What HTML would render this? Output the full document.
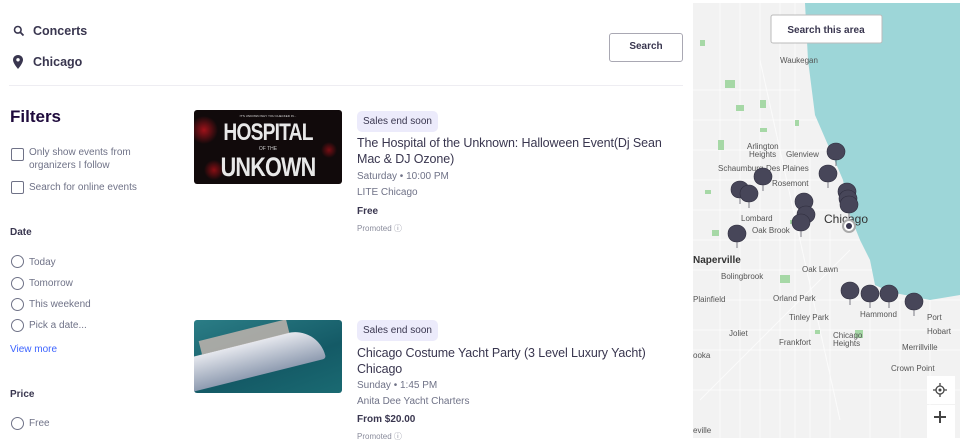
<!DOCTYPE html>
<html><head><meta charset="utf-8"><style>
*{margin:0;padding:0;box-sizing:border-box}
body{width:960px;height:438px;overflow:hidden;background:#fff;font-family:"Liberation Sans",sans-serif;color:#39364f;position:relative}
.a{position:absolute;white-space:nowrap}
.sm{font-size:10px;color:#6f7287}
.cb{position:absolute;width:13px;height:13px;border:1.3px solid #6f7287;border-radius:2px}
.rd{position:absolute;width:13px;height:13px;border:1.3px solid #6f7287;border-radius:50%}
.badge{position:absolute;background:#ecebfb;border-radius:5px;font-size:10px;color:#39364f;padding:5px 6px;height:21px}
.t{font-size:12.5px;color:#39364f;line-height:16px;white-space:normal;letter-spacing:-0.1px}
</style></head><body>
<svg class="a" style="left:13px;top:25px" width="12" height="12" viewBox="0 0 12 12"><circle cx="4.8" cy="4.8" r="3.3" fill="none" stroke="#39364f" stroke-width="1.6"/><path d="M7.3 7.3L10.5 10.5" stroke="#39364f" stroke-width="1.8"/></svg>
<div class="a" style="left:33px;top:24px;font-size:12.5px;font-weight:bold;color:#39364f">Concerts</div>
<svg class="a" style="left:13px;top:55px" width="10" height="14" viewBox="0 0 10 14"><path d="M5 0C2.2 0 0 2.2 0 4.8 0 8.5 5 14 5 14S10 8.5 10 4.8C10 2.2 7.8 0 5 0z" fill="#39364f"/><circle cx="5" cy="4.8" r="1.7" fill="#fff"/></svg>
<div class="a" style="left:33px;top:55px;font-size:12.5px;font-weight:bold;color:#39364f">Chicago</div>
<div class="a" style="left:609px;top:33px;width:74px;height:29px;border:1.3px solid #a9a8b3;border-radius:3px;font-size:10px;font-weight:bold;text-align:center;line-height:26px">Search</div>
<div class="a" style="left:9px;top:85px;width:674px;height:1px;background:#eeedf2"></div>

<div class="a" style="left:10px;top:107px;font-size:17px;font-weight:bold;color:#1e0a3c">Filters</div>
<div class="cb" style="left:11px;top:148px"></div>
<div class="a sm" style="left:29px;top:146px;line-height:13px;white-space:normal;width:110px">Only show events from organizers I follow</div>
<div class="cb" style="left:11px;top:181px"></div>
<div class="a sm" style="left:29px;top:182px">Search for online events</div>
<div class="a" style="left:10px;top:227px;font-size:10px;font-weight:bold">Date</div>
<div class="rd" style="left:11px;top:255px"></div><div class="a sm" style="left:29px;top:257px">Today</div>
<div class="rd" style="left:11px;top:277px"></div><div class="a sm" style="left:29px;top:278px">Tomorrow</div>
<div class="rd" style="left:11px;top:298px"></div><div class="a sm" style="left:29px;top:299px">This weekend</div>
<div class="rd" style="left:11px;top:319px"></div><div class="a sm" style="left:29px;top:320px">Pick a date...</div>
<div class="a" style="left:10px;top:344px;font-size:10px;color:#3d64ff">View more</div>
<div class="a" style="left:10px;top:389px;font-size:10px;font-weight:bold">Price</div>
<div class="rd" style="left:11px;top:417px"></div><div class="a sm" style="left:29px;top:418px">Free</div>

<div class="a" style="left:194px;top:110px;width:148px;height:74px;background:#110a0b;border-radius:3px;overflow:hidden">
<div style="position:absolute;left:0;top:0;width:148px;height:74px;background:radial-gradient(circle at 10px 20px,#a0121a 0,transparent 14px),radial-gradient(circle at 20px 60px,#8a0e14 0,transparent 10px),radial-gradient(circle at 135px 40px,#7a0e14 0,transparent 8px)"></div>
<div style="position:absolute;left:0;top:4px;width:148px;text-align:center;font-size:3px;color:#ddd">IT'S UNKOWN WHY YOU CHECKED IN...</div>
<div style="position:absolute;left:0;top:10px;width:148px;text-align:center;font:bold 24px/26px 'Liberation Sans Narrow','Liberation Sans',sans-serif;color:#e8e8e8;letter-spacing:-1px;transform:scaleX(.8)">HOSPITAL</div>
<div style="position:absolute;left:0;top:36px;width:148px;text-align:center;font-size:5px;color:#ccc">OF THE</div>
<div style="position:absolute;left:0;top:43px;width:148px;text-align:center;font:bold 27px/28px 'Liberation Sans Narrow','Liberation Sans',sans-serif;color:#e8e8e8;letter-spacing:-1px;transform:scaleX(.8)">UNKOWN</div>
</div>
<div class="badge" style="left:357px;top:111px">Sales end soon</div>
<div class="a t" style="left:357px;top:135px;width:330px">The Hospital of the Unknown: Halloween Event(Dj Sean Mac &amp; DJ Ozone)</div>
<div class="a sm" style="left:357px;top:171px">Saturday • 10:00 PM</div>
<div class="a sm" style="left:357px;top:187px">LITE Chicago</div>
<div class="a" style="left:357px;top:206px;font-size:10px;font-weight:bold">Free</div>
<div class="a" style="left:357px;top:223px;font-size:8px;color:#8a8c9c">Promoted ⓘ</div>

<div class="a" style="left:194px;top:320px;width:148px;height:73px;border-radius:3px;overflow:hidden;background:linear-gradient(160deg,#2b7d86,#145a66 60%,#1a6a72)">
<div style="position:absolute;left:-10px;top:22px;width:140px;height:34px;background:linear-gradient(180deg,#e6e8ee,#8e9bb0);transform:rotate(-14deg);border-radius:4px 40px 4px 4px"></div>
<div style="position:absolute;left:5px;top:10px;width:90px;height:14px;background:#c9b8b0;transform:rotate(-14deg);opacity:.8"></div>
</div>
<div class="badge" style="left:357px;top:320px">Sales end soon</div>
<div class="a t" style="left:357px;top:345px;width:330px">Chicago Costume Yacht Party (3 Level Luxury Yacht) Chicago</div>
<div class="a sm" style="left:357px;top:380px">Sunday • 1:45 PM</div>
<div class="a sm" style="left:357px;top:396px">Anita Dee Yacht Charters</div>
<div class="a" style="left:357px;top:414px;font-size:10px;font-weight:bold">From $20.00</div>
<div class="a" style="left:357px;top:431px;font-size:8px;color:#8a8c9c">Promoted ⓘ</div>

<svg class="a" style="left:693px;top:3px" width="267" height="435" viewBox="693 3 267 435" font-family="Liberation Sans,sans-serif">
<rect x="693" y="3" width="267" height="435" fill="#f2f2f2"/>
<g stroke="#fbfbfb" stroke-width="1" fill="none">
<path d="M693 120H960M693 180H830M693 240H960M693 300H960M693 350H960M740 3V438M780 3V438M810 150V438M760 60L840 420M700 400L850 250M900 300V438M693 90H800M693 150H830M693 210H850M693 270H960M693 330H960M693 390H960M720 3V438M760 3V438M795 3V438M830 230V438M870 300V438M930 300V438"/>
</g>
<g fill="#a6d8a6"><rect x="725" y="80" width="10" height="8"/><rect x="736" y="105" width="8" height="6"/><rect x="718" y="140" width="6" height="10"/><rect x="780" y="275" width="10" height="8"/><rect x="855" y="330" width="8" height="8"/><rect x="712" y="230" width="7" height="6"/><rect x="780" y="30" width="6" height="5"/><rect x="760" y="100" width="6" height="8"/><rect x="700" y="40" width="5" height="6"/><rect x="705" y="190" width="6" height="4"/><rect x="760" y="128" width="7" height="4"/><rect x="795" y="120" width="4" height="6"/><rect x="815" y="330" width="5" height="4"/><rect x="790" y="220" width="4" height="4"/></g>
<path d="M805 3H960V295L930 300L905 295L890 292L875 285L870 260L860 240L850 215L843 180L828 145L815 115L808 60Z" fill="#9dd6d8"/>
<g font-size="8" fill="#555">
<text x="780" y="63">Waukegan</text><text x="747" y="149">Arlington</text><text x="749" y="157">Heights</text><text x="786" y="157">Glenview</text>
<text x="718" y="171">Schaumburg</text><text x="766" y="171">Des Plaines</text><text x="772" y="186">Rosemont</text><text x="741" y="221">Lombard</text><text x="752" y="233">Oak Brook</text>
<text x="802" y="272">Oak Lawn</text><text x="721" y="279">Bolingbrook</text><text x="693" y="302">Plainfield</text><text x="773" y="301">Orland Park</text><text x="789" y="320">Tinley Park</text>
<text x="860" y="317">Hammond</text><text x="729" y="336">Joliet</text><text x="779" y="345">Frankfort</text><text x="833" y="338">Chicago</text><text x="833" y="346">Heights</text>
<text x="927" y="320">Port</text><text x="927" y="334">Hobart</text><text x="902" y="350">Merrillville</text><text x="891" y="371">Crown Point</text><text x="693" y="358">ooka</text><text x="693" y="433">eville</text>
<text x="693" y="263" font-size="10" fill="#333" font-weight="bold">Naperville</text>
<text x="824" y="223" font-size="12" fill="#333">Chicago</text></g>
<g fill="#474659" stroke="#2e2d3d" stroke-width=".6">
<path id="p" d="M0 0c-5.5 0-9-3.5-9-8.5s4-8.5 9-8.5 9 4 9 8.5-3.5 8.5-9 8.5l0 6z" transform="translate(836 160)"/>
<use href="#p" x="-8" y="22"/><use href="#p" x="11" y="40"/><use href="#p" x="12" y="47"/><use href="#p" x="13" y="53"/>
<use href="#p" x="-32" y="50"/><use href="#p" x="-30" y="63"/><use href="#p" x="-35" y="71"/><use href="#p" x="-73" y="25"/>
<use href="#p" x="-96" y="38"/><use href="#p" x="-87" y="42"/><use href="#p" x="-99" y="82"/>
<use href="#p" x="14" y="139"/><use href="#p" x="34" y="142"/><use href="#p" x="53" y="142"/><use href="#p" x="78" y="150"/></g>
<circle cx="849" cy="226" r="6" fill="#fff" stroke="#aaa" stroke-width="2"/><circle cx="849" cy="226" r="3" fill="#39364f"/>
<rect x="771" y="15" width="111" height="28" fill="#fff" stroke="#bbb" rx="2"/>
<text x="826" y="33" font-size="10" font-weight="bold" fill="#39364f" text-anchor="middle">Search this area</text>
<rect x="927" y="376" width="28" height="28" fill="#fff"/><rect x="927" y="405" width="28" height="33" fill="#fff"/>
<circle cx="940" cy="390" r="4" fill="none" stroke="#444" stroke-width="1.3"/><circle cx="940" cy="390" r="1.5" fill="#444"/><path d="M940 383v2.5M940 394.5v2.5M933 390h2.5M944.5 390h2.5" stroke="#444" stroke-width="1.3"/>
<path d="M940 411v12M934 417h12" stroke="#444" stroke-width="2"/>
</svg>
</body></html>
